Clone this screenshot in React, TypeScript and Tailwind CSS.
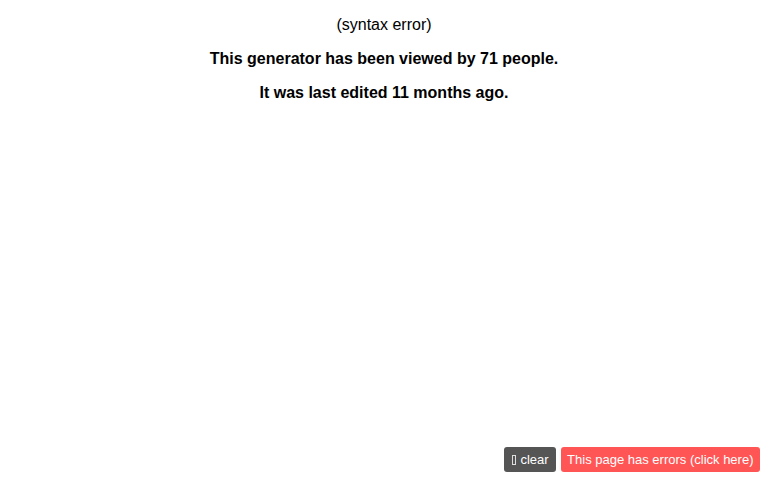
import React from 'react';

const App: React.FC = () => {
  return (
    <div className="h-[480px] w-full bg-white text-black font-['Liberation_Sans',Arial,sans-serif]">
      {/* generator output area */}
      <div className="flex flex-col items-center gap-4 pt-[16px] text-base leading-[18px]">
        <p>(syntax error)</p>
        <p className="font-bold">This generator has been viewed by 71 people.</p>
        <p className="font-bold">It was last edited 11 months ago.</p>
      </div>

      {/* error toolbar */}
      <div className="fixed bottom-2 right-2 flex gap-[5px] text-[13px] leading-[25px] text-white">
        <button className="flex h-[25px] items-center gap-[4px] rounded-[3px] bg-[#555555] pl-2 pr-[7px]">
          <span className="inline-block h-[10px] w-[4px] border border-white/80" />
          <span>clear</span>
        </button>
        <button className="h-[25px] rounded-[3px] bg-[#ff5555] px-[6.5px]">This page has errors (click here)</button>
      </div>
    </div>
  );
};

export default App;
